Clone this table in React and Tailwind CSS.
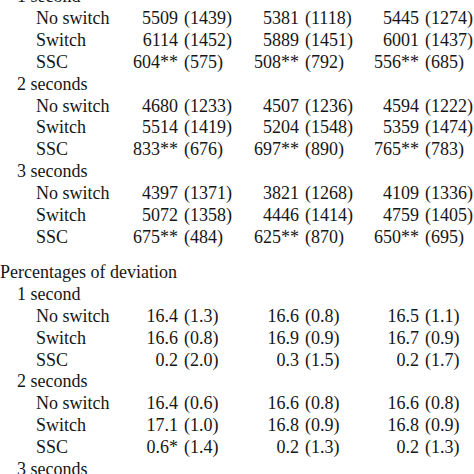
import React from "react";

const blocks = [
  {
    title: null,
    groups: [
      {
        label: "1 second",
        rows: [
          ["No switch", ["5509", "(1439)"], ["5381", "(1118)"], ["5445", "(1274)"]],
          ["Switch", ["6114", "(1452)"], ["5889", "(1451)"], ["6001", "(1437)"]],
          ["SSC", ["604**", "(575)"], ["508**", "(792)"], ["556**", "(685)"]],
        ],
      },
      {
        label: "2 seconds",
        rows: [
          ["No switch", ["4680", "(1233)"], ["4507", "(1236)"], ["4594", "(1222)"]],
          ["Switch", ["5514", "(1419)"], ["5204", "(1548)"], ["5359", "(1474)"]],
          ["SSC", ["833**", "(676)"], ["697**", "(890)"], ["765**", "(783)"]],
        ],
      },
      {
        label: "3 seconds",
        rows: [
          ["No switch", ["4397", "(1371)"], ["3821", "(1268)"], ["4109", "(1336)"]],
          ["Switch", ["5072", "(1358)"], ["4446", "(1414)"], ["4759", "(1405)"]],
          ["SSC", ["675**", "(484)"], ["625**", "(870)"], ["650**", "(695)"]],
        ],
      },
    ],
  },
  {
    title: "Percentages of deviation",
    groups: [
      {
        label: "1 second",
        rows: [
          ["No switch", ["16.4", "(1.3)"], ["16.6", "(0.8)"], ["16.5", "(1.1)"]],
          ["Switch", ["16.6", "(0.8)"], ["16.9", "(0.9)"], ["16.7", "(0.9)"]],
          ["SSC", ["0.2", "(2.0)"], ["0.3", "(1.5)"], ["0.2", "(1.7)"]],
        ],
      },
      {
        label: "2 seconds",
        rows: [
          ["No switch", ["16.4", "(0.6)"], ["16.6", "(0.8)"], ["16.6", "(0.8)"]],
          ["Switch", ["17.1", "(1.0)"], ["16.8", "(0.9)"], ["16.8", "(0.9)"]],
          ["SSC", ["0.6*", "(1.4)"], ["0.2", "(1.3)"], ["0.2", "(1.3)"]],
        ],
      },
      {
        label: "3 seconds",
        rows: [],
      },
    ],
  },
];

const Row = ({ label, cells }) => (
  <div className="grid grid-cols-[120px_58px_63px_58px_62px_58px_1fr]">
    <div className="pl-[36px]">{label}</div>
    {cells.map(([mean, sd], i) => (
      <React.Fragment key={i}>
        <div className="text-right">{mean}</div>
        <div className="pl-[6px]">{sd}</div>
      </React.Fragment>
    ))}
  </div>
);

export default function App() {
  return (
    <div className="h-[474px] w-[474px] overflow-hidden bg-white">
      <div className="-mt-[14px] whitespace-nowrap font-['Liberation_Serif'] text-[18px] leading-[21.9px] text-[#161616]">
        {blocks.map((block, b) => (
          <div key={b} className={b > 0 ? "mt-[13px]" : ""}>
            {block.title && <div>{block.title}</div>}
            {block.groups.map((g) => (
              <div key={g.label}>
                <div className="pl-[17px]">{g.label}</div>
                {g.rows.map(([label, ...cells], i) => (
                  <Row key={i} label={label} cells={cells} />
                ))}
              </div>
            ))}
          </div>
        ))}
      </div>
    </div>
  );
}
